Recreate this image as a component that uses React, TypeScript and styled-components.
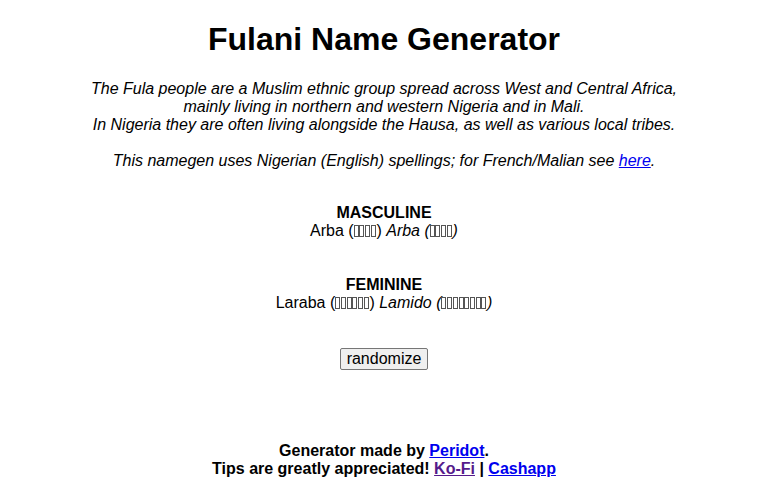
import styled, { createGlobalStyle } from "styled-components";

const GlobalStyle = createGlobalStyle`
  body {
    margin: 0;
    background: #ffffff;
    color: #000000;
    font-family: "Liberation Sans", Arial, sans-serif;
  }
`;

const Page = styled.div`
  display: flex;
  flex-direction: column;
  align-items: center;
  text-align: center;
  padding-top: 21px;
`;

const Title = styled.h1`
  margin: 0;
  font-size: 32px;
  line-height: 37px;
  font-weight: bold;
`;

const Intro = styled.p`
  margin: 22px 0 0;
  font-style: italic;
  font-size: 16px;
  line-height: 18px;
`;

const Link = styled.a<{ $visited?: boolean }>`
  color: ${(props) => (props.$visited ? "#551a8b" : "#0000ee")};
  text-decoration: underline;
`;

const Section = styled.div`
  margin-top: 34px;
  font-size: 16px;
  line-height: 18px;
  & + & {
    margin-top: 36px;
  }
`;

const Heading = styled.div`
  font-weight: bold;
`;

// stand-in for the glyphs the page has no font for (Adlam script)
const Tofu = styled.span`
  display: inline-block;
  width: 3px;
  height: 10px;
  margin-right: 0.7px;
  border: 1px solid #555;
  vertical-align: -1px;
`;

const Button = styled.button`
  margin-top: 36px;
  font-family: "Liberation Sans", Arial, sans-serif;
  font-size: 16px;
  line-height: 18px;
  padding: 1px 6px;
  background: #efefef;
  border: 1px solid #767676;
  border-radius: 2px;
  color: #000000;
`;

const Footer = styled.div`
  margin-top: 72px;
  font-weight: bold;
  font-size: 16px;
  line-height: 18px;
`;

const Missing = ({ count }: { count: number }) => (
  <>
    {Array.from({ length: count }, (_, i) => (
      <Tofu key={i} />
    ))}
  </>
);

const names = [
  { label: "MASCULINE", first: "Arba", firstLen: 4, second: "Arba", secondLen: 4 },
  { label: "FEMININE", first: "Laraba", firstLen: 6, second: "Lamido", secondLen: 8 },
];

export default function App() {
  return (
    <>
      <GlobalStyle />
      <Page>
        <Title>Fulani Name Generator</Title>
        <Intro>
          The Fula people are a Muslim ethnic group spread across West and Central Africa,
          <br />
          mainly living in northern and western Nigeria and in Mali.
          <br />
          In Nigeria they are often living alongside the Hausa, as well as various local tribes.
          <br />
          <br />
          This namegen uses Nigerian (English) spellings; for French/Malian see{" "}
          <Link href="#">here</Link>.
        </Intro>
        {names.map((n) => (
          <Section key={n.label}>
            <Heading>{n.label}</Heading>
            <div>
              {n.first} (<Missing count={n.firstLen} />){" "}
              <i>
                {n.second} (<Missing count={n.secondLen} />)
              </i>
            </div>
          </Section>
        ))}
        <Button>randomize</Button>
        <Footer>
          Generator made by <Link href="#">Peridot</Link>.
          <br />
          Tips are greatly appreciated! <Link href="#" $visited>Ko-Fi</Link> |{" "}
          <Link href="#">Cashapp</Link>
        </Footer>
      </Page>
    </>
  );
}
